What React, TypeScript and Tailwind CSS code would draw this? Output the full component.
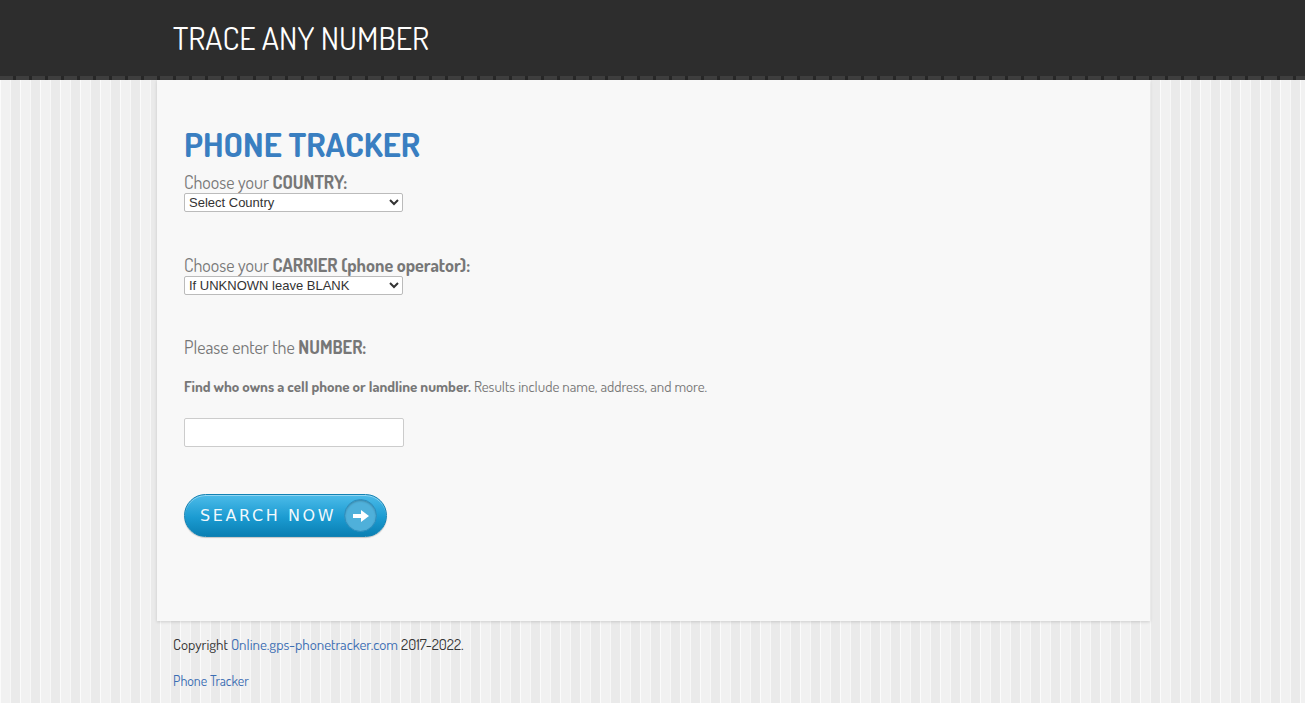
import React from 'react';

const dosis = "font-['Dosis','DejaVu_Sans_Condensed','Roboto_Condensed','Liberation_Sans_Narrow',Roboto,sans-serif]";

const Label: React.FC<{ plain: string; bold: string }> = ({ plain, bold }) => (
  <div className={`${dosis} text-[18px] leading-[20px] text-[#777]`}>
    {plain} <span className="font-bold">{bold}</span>
  </div>
);

const App: React.FC = () => {
  return (
    <div className="min-h-[703px] w-full bg-[repeating-linear-gradient(90deg,#fbfbfb_0px,#fbfbfb_1px,#f1f1f1_1px,#f1f1f1_10px,#f7f7f7_10px,#f7f7f7_11px,#eaeaea_11px,#eaeaea_20px)]">
      {/* header */}
      <div className="bg-[#2d2d2d]">
        <div className="ml-[173px] h-[76px] flex items-center">
          <h1 className={`${dosis} text-[32px] text-white font-normal`}>
            TRACE ANY NUMBER
          </h1>
        </div>
        <div className="h-[4px] bg-[repeating-linear-gradient(90deg,#3e3e3e_0px,#3e3e3e_13px,#272727_13px,#272727_16px)]" />
      </div>

      {/* main box */}
      <div className="ml-[157px] w-[993px] bg-[#f8f8f8] shadow-[0_1px_3px_rgba(0,0,0,0.15)] pl-[27px] pt-[42px] pb-[84px]">
        <h2 className={`${dosis} text-[34px] leading-[44px] font-bold text-[#3a7fc1]`}>PHONE TRACKER</h2>

        <div className="mt-[6px]">
          <Label plain="Choose your" bold="COUNTRY:" />
          <select className="mt-[1px] block w-[219px] h-[19px] border border-[#bbb] rounded-[2px] bg-white text-[13px] font-['Liberation_Sans',Arial,sans-serif] text-[#333] px-0">
            <option>Select Country</option>
          </select>
        </div>

        <div className="mt-[43px]">
          <Label plain="Choose your" bold="CARRIER (phone operator):" />
          <select className="mt-[1px] block w-[219px] h-[19px] border border-[#bbb] rounded-[2px] bg-white text-[13px] font-['Liberation_Sans',Arial,sans-serif] text-[#333] px-0">
            <option>If UNKNOWN leave BLANK</option>
          </select>
        </div>

        <div className="mt-[42px]">
          <Label plain="Please enter the" bold="NUMBER:" />
        </div>

        <p className={`${dosis} mt-[21px] text-[15px] leading-[18px] text-[#777]`}>
          <span className="font-bold">Find who owns a cell phone or landline number.</span> Results include name, address, and more.
        </p>

        <input
          type="text"
          className="mt-[22px] block w-[220px] h-[29px] border border-[#ccc] rounded-[2px] bg-white"
        />

        <button className="mt-[47px] w-[203px] h-[43px] rounded-full border border-[#1382b3] bg-[linear-gradient(#4cbbe9,#1b9bd1_55%,#0a7fb3)] shadow-[inset_0_1px_0_rgba(255,255,255,0.4),0_1px_1px_rgba(0,0,0,0.2)] flex items-center pl-[15px] pr-[9px]">
          <span className="font-['DejaVu_Sans',Verdana,sans-serif] text-[16px] tracking-[2.6px] text-white/95 font-normal">
            SEARCH NOW
          </span>
          <span className="ml-auto w-[33px] h-[33px] rounded-full bg-[#4fb0da] border border-[#2b8dbd] shadow-[inset_0_1px_2px_rgba(0,0,0,0.25)] flex items-center justify-center">
            <svg width="18" height="14" viewBox="0 0 18 14">
              <path d="M1 5h8V1l8 6-8 6V9H1z" fill="#fff" />
            </svg>
          </span>
        </button>
      </div>

      {/* footer */}
      <div className={`${dosis} ml-[173px] pt-[14px] pb-[10px] text-[15px] text-[#333]`}>
        <p className="leading-[20px]">
          Copyright <a className="text-[#3a6db3]">Online.gps-phonetracker.com</a> 2017-2022.
        </p>
        <p className="mt-[16px] leading-[20px]">
          <a className="text-[#3a6db3] text-[14px]">Phone Tracker</a>
        </p>
      </div>
    </div>
  );
};

export default App;
